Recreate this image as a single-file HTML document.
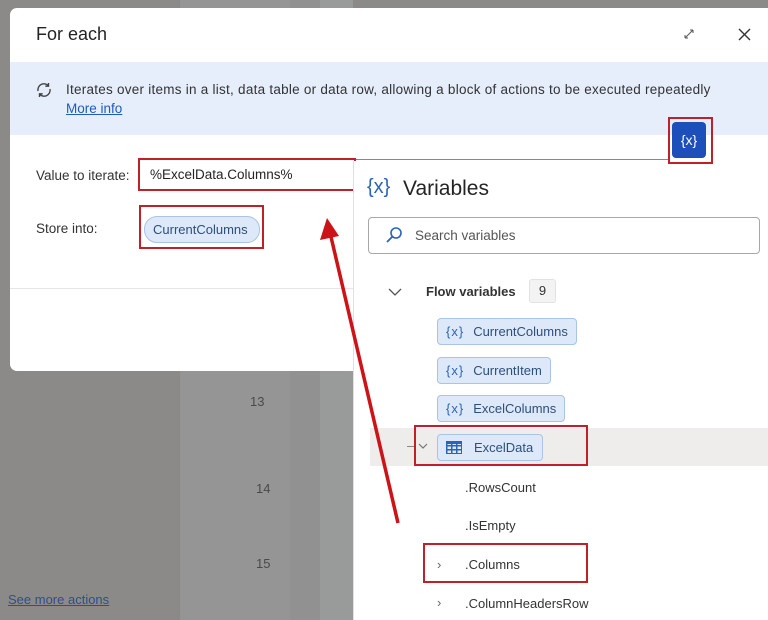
<!DOCTYPE html>
<html><head><meta charset="utf-8"><style>
*{margin:0;padding:0;box-sizing:border-box}
body{width:768px;height:620px;overflow:hidden;position:relative;background:#8c8989;font-family:"Liberation Sans",sans-serif;color:#242424}
.abs{position:absolute}
.chip{position:absolute;background:#dde9f8;border:1px solid #a9c4e6;border-radius:4px;color:#2d4f7c;font-size:13px;height:27px;line-height:25px;padding:0 8px}
.chip b{font-weight:normal;color:#2b64b8;margin-right:9px;letter-spacing:1px}
.red{position:absolute;border:2px solid #c0202a}
.sub{position:absolute;font-size:13px;color:#333}
</style></head><body>
<div class="abs" style="left:180px;top:0;width:112px;height:620px;background:#959595"></div>
<div class="abs" style="left:290px;top:0;width:30px;height:620px;background:#919191"></div>
<div class="abs" style="left:320px;top:0;width:33px;height:620px;background:#999b9b"></div>
<div class="abs" style="left:250px;top:394px;font-size:13px;color:#4a4a4a">13</div>
<div class="abs" style="left:256px;top:481px;font-size:13px;color:#4a4a4a">14</div>
<div class="abs" style="left:256px;top:556px;font-size:13px;color:#4a4a4a">15</div>
<div class="abs" style="left:8px;top:592px;font-size:13px;color:#2d4f8c;text-decoration:underline">See more actions</div>

<div class="abs" style="left:10px;top:8px;width:770px;height:363px;background:#fff;border-radius:7px 0 0 7px"></div>
<div class="abs" style="left:36px;top:24px;font-size:18px;color:#242424">For each</div>
<svg class="abs" style="left:682px;top:27px" width="14" height="14" viewBox="0 0 14 14"><path d="M3 11L11 3M3 11v-3M3 11h3M11 3h-3M11 3v3" stroke="#555" stroke-width="1" fill="none"/></svg>
<svg class="abs" style="left:737px;top:27px" width="15" height="15" viewBox="0 0 15 15"><path d="M2 2L13 13M13 2L2 13" stroke="#333" stroke-width="1.4"/></svg>
<div class="abs" style="left:10px;top:62px;width:758px;height:73px;background:#e6eefb"></div>
<svg class="abs" style="left:35px;top:81px" width="18" height="18" viewBox="0 0 18 18"><path d="M3 10A6 6 0 0 1 13.5 5M15 8A6 6 0 0 1 4.5 13M13.5 2v3.2h-3.2M4.5 16v-3.2h3.2" stroke="#444" stroke-width="1.4" fill="none"/></svg>
<div class="abs" style="left:66px;top:82px;font-size:13.5px;letter-spacing:0.25px;color:#333;white-space:nowrap">Iterates over items in a list, data table or data row, allowing a block of actions to be executed repeatedly</div>
<div class="abs" style="left:66px;top:101px;font-size:13.5px;color:#1f5bbf;text-decoration:underline">More info</div>

<div class="abs" style="left:36px;top:168px;font-size:13.5px;color:#333">Value to iterate:</div>
<div class="abs" style="left:140px;top:159px;width:530px;height:1px;background:#888"></div>
<div class="abs" style="left:140px;top:160px;width:214px;height:30px;background:#fff;font-size:13.5px;padding:7px 10px;color:#242424">%ExcelData.Columns%</div>
<div class="red" style="left:138px;top:158px;width:218px;height:33px"></div>
<div class="abs" style="left:36px;top:221px;font-size:13.5px;color:#333">Store into:</div>
<div class="abs" style="left:144px;top:216px;width:116px;height:27px;background:#dde9f8;border:1px solid #aac4e6;border-radius:13px;font-size:13px;color:#2d4f7c;line-height:25px;padding-left:8px">CurrentColumns</div>
<div class="red" style="left:139px;top:205px;width:125px;height:44px"></div>
<div class="abs" style="left:10px;top:288px;width:343px;height:1px;background:#e6e6e6"></div>

<div class="abs" style="left:353px;top:161px;width:415px;height:459px;background:#fff;border-left:1px solid #e0e0e0"></div>
<div class="abs" style="left:672px;top:122px;width:34px;height:36px;background:#1c4fb9;border-radius:4px;color:#fff;font-size:14px;text-align:center;line-height:36px">{x}</div>
<div class="red" style="left:668px;top:117px;width:45px;height:47px"></div>
<div class="abs" style="left:367px;top:176px;font-size:20px;color:#2b64b8">{x}</div>
<div class="abs" style="left:403px;top:177px;font-size:21px;color:#242424">Variables</div>
<div class="abs" style="left:368px;top:217px;width:392px;height:37px;border:1px solid #a8a8a8;border-radius:4px"></div>
<svg class="abs" style="left:384px;top:225px" width="20" height="20" viewBox="0 0 20 20"><circle cx="12" cy="8" r="5" stroke="#2b64b8" stroke-width="1.6" fill="none"/><path d="M8.5 11.5L3 17" stroke="#2b64b8" stroke-width="1.8"/></svg>
<div class="abs" style="left:415px;top:228px;font-size:13.5px;color:#555">Search variables</div>
<svg class="abs" style="left:388px;top:287px" width="14" height="10" viewBox="0 0 14 10"><path d="M1 2l6 6 6-6" stroke="#555" stroke-width="1.3" fill="none"/></svg>
<div class="abs" style="left:426px;top:284px;font-size:13px;font-weight:bold;color:#333">Flow variables</div>
<div class="abs" style="left:529px;top:279px;width:27px;height:24px;background:#f3f3f3;border:1px solid #e2e2e2;border-radius:3px;font-size:13px;text-align:center;line-height:22px;color:#333">9</div>
<div class="chip" style="left:437px;top:318px"><b>{x}</b>CurrentColumns</div>
<div class="chip" style="left:437px;top:357px"><b>{x}</b>CurrentItem</div>
<div class="chip" style="left:437px;top:395px"><b>{x}</b>ExcelColumns</div>
<div class="abs" style="left:370px;top:428px;width:398px;height:38px;background:#efedec"></div>
<div class="abs" style="left:407px;top:446px;width:8px;height:1px;background:#888"></div>
<svg class="abs" style="left:418px;top:443px" width="10" height="7" viewBox="0 0 10 7"><path d="M1 1l4 4 4-4" stroke="#777" stroke-width="1.2" fill="none"/></svg>
<div class="chip" style="left:437px;top:434px;width:106px"><b style="display:inline-block;width:16px;height:13px;vertical-align:-2px;margin-right:12px;background:linear-gradient(#2b64b8 0 3px,transparent 3px) , repeating-linear-gradient(90deg,#2b64b8 0 1.5px,transparent 1.5px 5px),repeating-linear-gradient(#2b64b8 0 1.5px,transparent 1.5px 4px)"></b>ExcelData</div>
<div class="red" style="left:414px;top:425px;width:174px;height:41px"></div>
<div class="sub" style="left:465px;top:480px">.RowsCount</div>
<div class="sub" style="left:465px;top:518px">.IsEmpty</div>
<div class="sub" style="left:437px;top:557px;color:#666">›</div>
<div class="sub" style="left:465px;top:557px">.Columns</div>
<div class="red" style="left:423px;top:543px;width:165px;height:40px"></div>
<div class="sub" style="left:437px;top:595px;color:#666">›</div>
<div class="sub" style="left:465px;top:596px">.ColumnHeadersRow</div>

<svg class="abs" style="left:0;top:0" width="768" height="620"><path d="M398 523L328 224" stroke="#cc1418" stroke-width="3.5" fill="none"/><path d="M327 218L320 240L339 236Z" fill="#cc1418"/></svg>
</body></html>
